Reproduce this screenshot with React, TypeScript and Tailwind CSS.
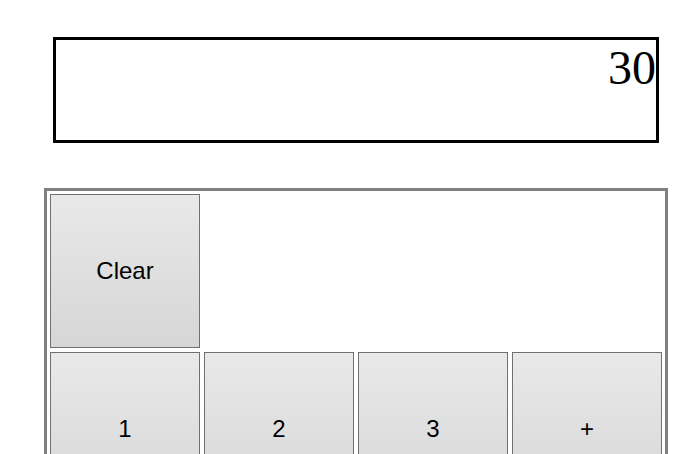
import { useState } from "react";

const ROWS: string[][] = [
  ["Clear"],
  ["1", "2", "3", "+"],
  ["4", "5", "6", "-"],
  ["7", "8", "9", "*"],
  ["0", ".", "=", "/"],
];

function Key({ label, onPress }: { label: string; onPress: (k: string) => void }) {
  return (
    <button
      className="w-[150px] h-[154px] border border-[#707070] bg-gradient-to-b from-[#e9e9e9] to-[#d6d6d6] text-black text-[24px] font-['Liberation_Sans',Arial,sans-serif] cursor-default"
      onClick={() => onPress(label)}
    >
      {label}
    </button>
  );
}

export default function App() {
  const [display, setDisplay] = useState("30");

  const press = (k: string) => {
    if (k === "Clear") return setDisplay("");
    if (k === "=") {
      try {
        // eslint-disable-next-line no-new-func
        setDisplay(String(Function(`return (${display})`)()));
      } catch {
        setDisplay("");
      }
      return;
    }
    setDisplay((d) => d + k);
  };

  return (
    <div className="bg-white min-h-screen pt-[37px]">
      {/* display */}
      <div className="ml-[53px] w-[606px] h-[106px] border-[3px] border-black text-right text-[48px] leading-[55px] text-black font-['Liberation_Serif','Times_New_Roman',serif] overflow-hidden">
        {display}
      </div>

      {/* keypad */}
      <div className="ml-[44px] mt-[45px] w-[624px] border-[3px] border-[#808080] p-[3px] flex flex-col gap-[4px]">
        {ROWS.map((row, i) => (
          <div key={i} className="flex gap-[4px]">
            {row.map((k) => (
              <Key key={k} label={k} onPress={press} />
            ))}
          </div>
        ))}
      </div>
    </div>
  );
}
